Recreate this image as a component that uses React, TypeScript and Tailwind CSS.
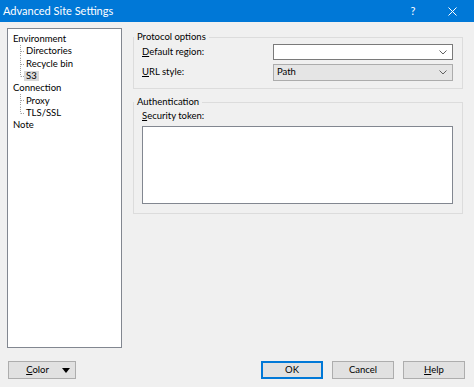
import React from 'react';

const font = { fontFamily: '"Segoe UI", Lato, "Noto Sans", sans-serif' };

const TreeBranch: React.FC<{ last?: boolean }> = ({ last }) => (
  <svg width="13" height="12.3" viewBox="0 0 13 12.3" className="shrink-0">
    <line x1="7.5" y1="0" x2="7.5" y2={last ? 6.5 : 12.3} stroke="#a0a0a0" strokeWidth="1" strokeDasharray="1 1" />
    <line x1="8" y1="6.5" x2="12" y2="6.5" stroke="#a0a0a0" strokeWidth="1" strokeDasharray="1 1" />
  </svg>
);

const Node: React.FC<{ label: string }> = ({ label }) => (
  <div className="h-[12.3px] flex items-center">{label}</div>
);

const Child: React.FC<{ label: string; last?: boolean; selected?: boolean }> = ({ label, last, selected }) => (
  <div className="h-[12.3px] flex items-center">
    <TreeBranch last={last} />
    <span className={selected ? 'bg-[#d9d9d9] px-[2px] h-[10px] flex items-center -ml-[2px]' : ''}>{label}</span>
  </div>
);

const Chevron: React.FC = () => (
  <svg width="8" height="5" viewBox="0 0 8 5" className="ml-auto mr-[5px]">
    <path d="M0.5 0.5 L4 4 L7.5 0.5" fill="none" stroke="#606060" strokeWidth="1" />
  </svg>
);

const Btn: React.FC<{ children: React.ReactNode; primary?: boolean }> = ({ children, primary }) => (
  <button
    className={
      'w-[62px] h-[18px] bg-[#e1e1e1] flex items-center justify-center ' +
      (primary ? 'border-2 border-[#0078d7]' : 'border border-[#adadad]')
    }
  >
    {children}
  </button>
);

export default function App() {
  return (
    <div className="w-[474px] h-[387px] bg-[#f0f0f0] flex flex-col overflow-hidden text-[9.5px] text-black" style={font}>
      <div className="h-[22px] bg-[#0078d7] flex items-center pl-[3px] text-white text-[11px] shrink-0">
        <span className="flex-1">Advanced Site Settings</span>
        <span className="w-[34px] text-center">?</span>
        <div className="w-[44px] flex justify-center">
          <svg width="9" height="9" viewBox="0 0 9 9">
            <path d="M0.5 0.5 L8.5 8.5 M8.5 0.5 L0.5 8.5" stroke="white" strokeWidth="1" />
          </svg>
        </div>
      </div>

      <div className="flex pt-[6px] pl-[7px] pr-[11px] gap-[11px]">
        <div className="w-[115px] h-[320px] bg-white border border-[#828790] pl-[5px] pt-[4px] shrink-0">
          <Node label="Environment" />
          <Child label="Directories" />
          <Child label="Recycle bin" />
          <Child label="S3" last selected />
          <Node label="Connection" />
          <Child label="Proxy" />
          <Child label="TLS/SSL" last />
          <Node label="Note" />
        </div>

        <div className="flex-1 flex flex-col mt-[3px]">
          <fieldset className="border border-[#dcdcdc] pl-[8px] pr-[9px] pb-[7px]">
            <legend className="px-[3px] -ml-[8px] leading-[12px]">Protocol options</legend>
            <div className="flex items-center mt-[1px]">
              <span><u>D</u>efault region:</span>
              <div className="ml-auto w-[180px] h-[16px] bg-white border border-[#7a7a7a] flex items-center">
                <Chevron />
              </div>
            </div>
            <div className="flex items-center mt-[4px]">
              <span><u>U</u>RL style:</span>
              <div className="ml-auto w-[180px] h-[17px] bg-[#e5e5e5] border border-[#acacac] flex items-center pl-[3px]">
                Path
                <Chevron />
              </div>
            </div>
          </fieldset>

          <fieldset className="border border-[#dcdcdc] pl-[8px] pr-[9px] pb-[9px] mt-[7px]">
            <legend className="px-[3px] -ml-[8px] leading-[12px]">Authentication</legend>
            <div className="leading-[12px] mt-[2px]"><u>S</u>ecurity token:</div>
            <div className="mt-[4px] w-[311px] h-[78px] bg-white border border-[#828790]" />
          </fieldset>
        </div>
      </div>

      <div className="flex items-center mt-[13px] pl-[8px] pr-[9px]">
        <button className="w-[68px] h-[18px] bg-[#e1e1e1] border border-[#adadad] flex items-center">
          <span className="flex-1 text-center pl-[4px]"><u>C</u>olor</span>
          <svg width="8" height="5" viewBox="0 0 8 5" className="mr-[5px]">
            <path d="M0 0 L8 0 L4 5 Z" fill="black" />
          </svg>
        </button>
        <div className="ml-auto flex gap-[9px]">
          <Btn primary>OK</Btn>
          <Btn>Cancel</Btn>
          <Btn><u>H</u>elp</Btn>
        </div>
      </div>
    </div>
  );
}
